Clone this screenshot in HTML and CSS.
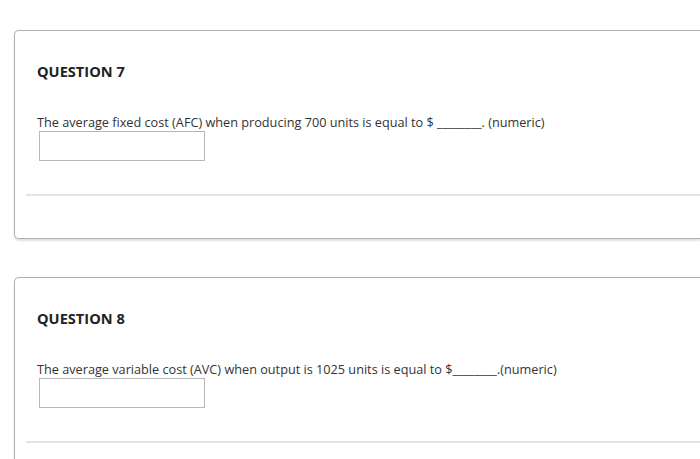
FILE: index.html
```html
<!DOCTYPE html>
<html>
<head>
<meta charset="utf-8">
<link rel="stylesheet" href="styles.css">
</head>
<body>
<div class="page">
  <section class="card">
    <h2 class="q-title">QUESTION 7</h2>
    <p class="q-text">The average fixed cost (AFC) when producing 700 units is equal to $ ________. (numeric)</p>
    <div class="answer"></div>
    <hr class="divider">
  </section>
  <section class="card card-open">
    <h2 class="q-title">QUESTION 8</h2>
    <p class="q-text">The average variable cost (AVC) when output is 1025 units is equal to $________.(numeric)</p>
    <div class="answer"></div>
    <hr class="divider">
  </section>
</div>
</body>
</html>
```

FILE: styles.css
```css
html, body {
  margin: 0;
  padding: 0;
  background: #ffffff;
  height: 100%;
  overflow: hidden;
}
body {
  font-family: "Open Sans", "Liberation Sans", sans-serif;
  color: #2b2b2b;
}
.page {
  padding: 30px 0 0 14px;
  display: flex;
  flex-direction: column;
  gap: 38px;
}
.card {
  border: 1px solid #b0b0b0;
  border-right: none;
  border-radius: 5px 0 0 5px;
  box-shadow: 0 2px 2px rgba(0, 0, 0, 0.12);
  padding: 30px 0 42px 22px;
  background: #fff;
}
.card-open {
  padding-bottom: 100px;
}
.q-title {
  margin: 0;
  font-size: 14.6px;
  line-height: 20px;
  font-weight: 700;
  color: #222;
}
.q-text {
  margin: 33px 0 0 0;
  font-size: 12.7px;
  line-height: 16px;
  color: #333;
}
.answer {
  margin: 1px 0 0 2px;
  width: 164px;
  height: 28px;
  border: 1px solid #b8b8b8;
  background: #fff;
}
.divider {
  margin: 33px 0 0 -11px;
  border: none;
  border-top: 2px solid #e4e4e4;
  height: 0;
}
```
